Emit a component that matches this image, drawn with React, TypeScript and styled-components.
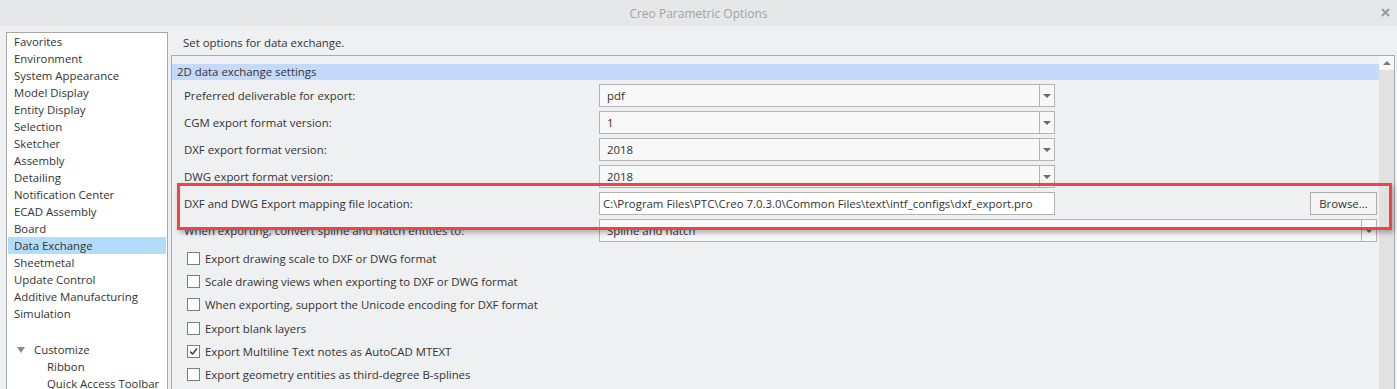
import React from 'react';
import styled, { createGlobalStyle } from 'styled-components';

const GlobalStyle = createGlobalStyle`
  html, body {
    margin: 0;
    padding: 0;
    background: #eff0f2;
    font-family: "Segoe UI", "Open Sans", "Noto Sans", sans-serif;
    font-size: 11.4px;
    color: #333;
  }
  * { box-sizing: border-box; }
`;

const Window = styled.div`
  position: relative;
  width: 1397px;
  height: 389px;
  overflow: hidden;
  display: flex;
  flex-direction: column;
`;

const TitleBar = styled.div`
  height: 26px;
  flex: none;
  background: #e6e7e9;
  display: grid;
  grid-template-columns: 1fr auto 1fr;
  align-items: center;
`;

const Title = styled.div`
  grid-column: 2;
  color: #a3a3a3;
  font-size: 12px;
`;

const CloseBox = styled.div`
  grid-column: 3;
  justify-self: end;
  display: flex;
  padding-right: 7px;
  margin-top: -2px;
`;

const Body = styled.div`
  flex: 1;
  display: flex;
  padding: 6px 2px 0 6px;
  gap: 3px;
  min-height: 0;
`;

const Nav = styled.div`
  width: 162px;
  flex: none;
  background: #fff;
  border: 1px solid #a8a8a8;
  border-bottom: none;
  display: flex;
  flex-direction: column;
`;

const NavItem = styled.div<{ $active?: boolean; $indent?: number }>`
  height: 17px;
  line-height: 17px;
  padding-left: ${(p) => 6 + (p.$indent ?? 0)}px;
  margin: 0 1px;
  background: ${(p) => (p.$active ? '#b3dcfa' : 'transparent')};
  white-space: nowrap;
  display: flex;
  align-items: center;
  gap: 9px;
`;

const NavSeparator = styled.div`
  height: 1px;
  background: #d4d4d4;
  margin: 7px 2px 12px 2px;
`;

const Triangle = styled.span`
  width: 0;
  height: 0;
  border-left: 4px solid transparent;
  border-right: 4px solid transparent;
  border-top: 6px solid #8a8a8a;
  margin-left: 3px;
`;

const Main = styled.div`
  flex: 1;
  display: flex;
  flex-direction: column;
  min-width: 0;
`;

const Heading = styled.div`
  height: 23px;
  flex: none;
  line-height: 22px;
  padding-left: 12px;
`;

const Panel = styled.div`
  flex: 1;
  display: flex;
  border-top: 1px solid #ababab;
  border-left: 1px solid #ababab;
  border-right: 1px solid #ababab;
  min-height: 0;
`;

const Content = styled.div`
  flex: 1;
  display: flex;
  flex-direction: column;
  min-width: 0;
`;

const ScrolledGap = styled.div`
  height: 8px;
  flex: none;
`;

const SectionHeader = styled.div`
  height: 16px;
  line-height: 16px;
  background: #c5d9fb;
  padding-left: 5px;
  margin-bottom: 4px;
`;

const Row = styled.div`
  display: grid;
  grid-template-columns: 427px 456px 1fr;
  align-items: center;
  height: 23px;
  margin-bottom: 4px;
  padding-right: 2px;
`;

const WideRow = styled(Row)`
  grid-template-columns: 427px 1fr;
`;

const Label = styled.div`
  padding-left: 12px;
  white-space: nowrap;
`;

const Combo = styled.div`
  height: 23px;
  display: flex;
  background: #f8f8f8;
  border: 1px solid #b4b4b4;
`;

const ComboValue = styled.div`
  flex: 1;
  line-height: 21px;
  padding-left: 7px;
`;

const ComboArrow = styled.div`
  width: 15px;
  border-left: 1px solid #b4b4b4;
  display: flex;
  align-items: center;
  justify-content: center;
`;

const ArrowGlyph = styled.span`
  width: 0;
  height: 0;
  border-left: 4px solid transparent;
  border-right: 4px solid transparent;
  border-top: 4px solid #6a6a6a;
  margin-top: 1px;
`;

const TextField = styled.div`
  height: 23px;
  background: #fff;
  border: 1px solid #b4b4b4;
  line-height: 21px;
  padding-left: 3px;
  white-space: nowrap;
  overflow: hidden;
`;

const BrowseButton = styled.div`
  justify-self: end;
  width: 67px;
  height: 23px;
  border: 1px solid #adadad;
  background: #f4f4f5;
  line-height: 21px;
  text-align: center;
`;

const Checks = styled.div`
  display: flex;
  flex-direction: column;
  padding-top: 1px;
`;

const CheckRow = styled.div`
  height: 23.2px;
  display: flex;
  align-items: center;
  gap: 5px;
  padding-left: 15px;
`;

const Box = styled.span`
  width: 13px;
  height: 13px;
  flex: none;
  background: #fff;
  border: 1px solid #7c7c7c;
  display: flex;
  align-items: center;
  justify-content: center;
`;

const Scrollbar = styled.div`
  width: 15px;
  flex: none;
  background: #e1e1e2;
  display: flex;
  flex-direction: column;
`;

const ScrollUp = styled.div`
  height: 14px;
  background: #f8f8f8;
  display: flex;
  align-items: center;
  justify-content: center;
`;

const UpGlyph = styled.span`
  width: 0;
  height: 0;
  border-left: 4px solid transparent;
  border-right: 4px solid transparent;
  border-bottom: 4px solid #7a7a7a;
`;

const Highlight = styled.div`
  position: absolute;
  left: 177px;
  top: 183px;
  width: 1215px;
  height: 47px;
  border: 3px solid #f04343;
  box-shadow: 2px 3px 5px rgba(0, 0, 0, 0.28);
  pointer-events: none;
`;

const navItems = [
  'Favorites',
  'Environment',
  'System Appearance',
  'Model Display',
  'Entity Display',
  'Selection',
  'Sketcher',
  'Assembly',
  'Detailing',
  'Notification Center',
  'ECAD Assembly',
  'Board',
  'Data Exchange',
  'Sheetmetal',
  'Update Control',
  'Additive Manufacturing',
  'Simulation',
];

const combos = [
  { label: 'Preferred deliverable for export:', value: 'pdf' },
  { label: 'CGM export format version:', value: '1' },
  { label: 'DXF export format version:', value: '2018' },
  { label: 'DWG export format version:', value: '2018' },
];

const checks = [
  { label: 'Export drawing scale to DXF or DWG format', checked: false },
  { label: 'Scale drawing views when exporting to DXF or DWG format', checked: false },
  { label: 'When exporting, support the Unicode encoding for DXF format', checked: false },
  { label: 'Export blank layers', checked: false },
  { label: 'Export Multiline Text notes as AutoCAD MTEXT', checked: true },
  { label: 'Export geometry entities as third-degree B-splines', checked: false },
];

const ComboBox: React.FC<{ value: string }> = ({ value }) => (
  <Combo>
    <ComboValue>{value}</ComboValue>
    <ComboArrow>
      <ArrowGlyph />
    </ComboArrow>
  </Combo>
);

const App: React.FC = () => {
  return (
    <Window>
      <GlobalStyle />
      <TitleBar>
        <Title>Creo Parametric Options</Title>
        <CloseBox>
          <svg width="9" height="9" viewBox="0 0 9 9">
            <path d="M1 1 L8 8 M8 1 L1 8" stroke="#9a9a9a" strokeWidth="2" />
          </svg>
        </CloseBox>
      </TitleBar>
      <Body>
        <Nav>
          {navItems.map((item) => (
            <NavItem key={item} $active={item === 'Data Exchange'}>
              {item}
            </NavItem>
          ))}
          <NavSeparator />
          <NavItem>
            <Triangle />
            Customize
          </NavItem>
          <NavItem $indent={33}>Ribbon</NavItem>
          <NavItem $indent={33}>Quick Access Toolbar</NavItem>
        </Nav>
        <Main>
          <Heading>Set options for data exchange.</Heading>
          <Panel>
            <Content>
              <ScrolledGap />
              <SectionHeader>2D data exchange settings</SectionHeader>
              {combos.map((c) => (
                <Row key={c.label}>
                  <Label>{c.label}</Label>
                  <ComboBox value={c.value} />
                </Row>
              ))}
              <Row>
                <Label>DXF and DWG Export mapping file location:</Label>
                <TextField>
                  C:\Program Files\PTC\Creo 7.0.3.0\Common Files\text\intf_configs\dxf_export.pro
                </TextField>
                <BrowseButton>Browse...</BrowseButton>
              </Row>
              <WideRow>
                <Label>When exporting, convert spline and hatch entities to:</Label>
                <ComboBox value="Spline and hatch" />
              </WideRow>
              <Checks>
                {checks.map((c) => (
                  <CheckRow key={c.label}>
                    <Box>
                      {c.checked && (
                        <svg width="11" height="11" viewBox="0 0 11 11">
                          <path d="M2 5.5 L4.5 8 L9 2.5" stroke="#333" strokeWidth="1.4" fill="none" />
                        </svg>
                      )}
                    </Box>
                    {c.label}
                  </CheckRow>
                ))}
              </Checks>
            </Content>
            <Scrollbar>
              <ScrollUp>
                <UpGlyph />
              </ScrollUp>
            </Scrollbar>
          </Panel>
        </Main>
      </Body>
      <Highlight />
    </Window>
  );
};

export default App;
